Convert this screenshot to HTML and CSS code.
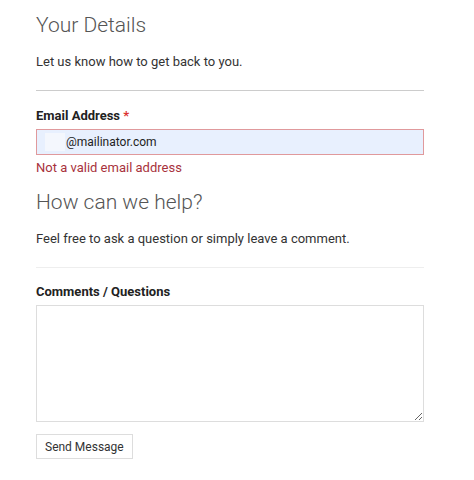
FILE: index.html
```html
<!DOCTYPE html>
<html lang="en">

<head>
  <meta charset="UTF-8" />
  <meta name="viewport" content="width=device-width, initial-scale=1.0" />
  <title>Contact</title>
  <link rel="stylesheet" href="styles.css">
</head>

<body>
  <form class="contact-form">

    <!-- Your Details -->
    <div class="section">
      <h2>Your Details</h2>
      <p class="desc">Let us know how to get back to you.</p>
      <hr class="rule">
    </div>

    <div class="field">
      <label for="email">Email Address <span class="req">*</span></label>
      <div class="input error">
        <span class="blank"></span>
        <span>@mailinator.com</span>
      </div>
      <p class="error-msg">Not a valid email address</p>
    </div>

    <!-- Comments -->
    <div class="section">
      <h2>How can we help?</h2>
      <p class="desc">Feel free to ask a question or simply leave a comment.</p>
      <hr class="rule light">
    </div>

    <div class="field comments">
      <label for="comments">Comments / Questions</label>
      <textarea id="comments"></textarea>
    </div>

    <button type="button" class="send-btn">Send Message</button>
  </form>
</body>

</html>
```

FILE: styles.css
```css
* {
  margin: 0;
  padding: 0;
  box-sizing: border-box;
}

body {
  font-family: "Roboto", "Liberation Sans", sans-serif;
  background-color: #fff;
  color: #222;
}

.contact-form {
  width: 388px;
  margin-left: 36px;
  padding-top: 11px;
}

h2 {
  font-size: 21px;
  font-weight: 300;
  color: #555;
  line-height: 28px;
}

.desc {
  font-size: 13px;
  color: #333;
  margin-top: 14px;
  line-height: 18px;
}

.rule {
  border: none;
  border-top: 1px solid #ccc;
  margin-top: 19px;
}

.rule.light {
  border-top-color: #eee;
}

.field {
  margin-top: 16px;
}

.field.comments {
  margin-top: 15px;
}

label {
  display: block;
  font-size: 13px;
  font-weight: 700;
  color: #222;
  line-height: 18px;
  margin-bottom: 4px;
}

.req {
  color: #dc3232;
}

.input {
  display: flex;
  align-items: center;
  height: 26px;
  padding: 0 8px;
  font-size: 12px;
  color: #222;
  background-color: #e8f0fe;
  border: 1px solid #ccc;
}

.input.error {
  border-color: #e0999c;
}

.blank {
  width: 20px;
  height: 18px;
  margin-right: 1px;
  background-color: #f4f7fd;
}

.error-msg {
  font-size: 13px;
  color: #a8323c;
  line-height: 18px;
  margin-top: 4px;
  margin-bottom: 11px;
}

textarea {
  display: block;
  width: 100%;
  height: 117px;
  border: 1px solid #ddd;
  font-family: inherit;
}

.send-btn {
  margin-top: 12px;
  margin-bottom: 20px;
  padding: 0 8px;
  height: 25px;
  font-family: inherit;
  font-size: 12px;
  color: #333;
  background-color: #fff;
  border: 1px solid #ddd;
}
```
